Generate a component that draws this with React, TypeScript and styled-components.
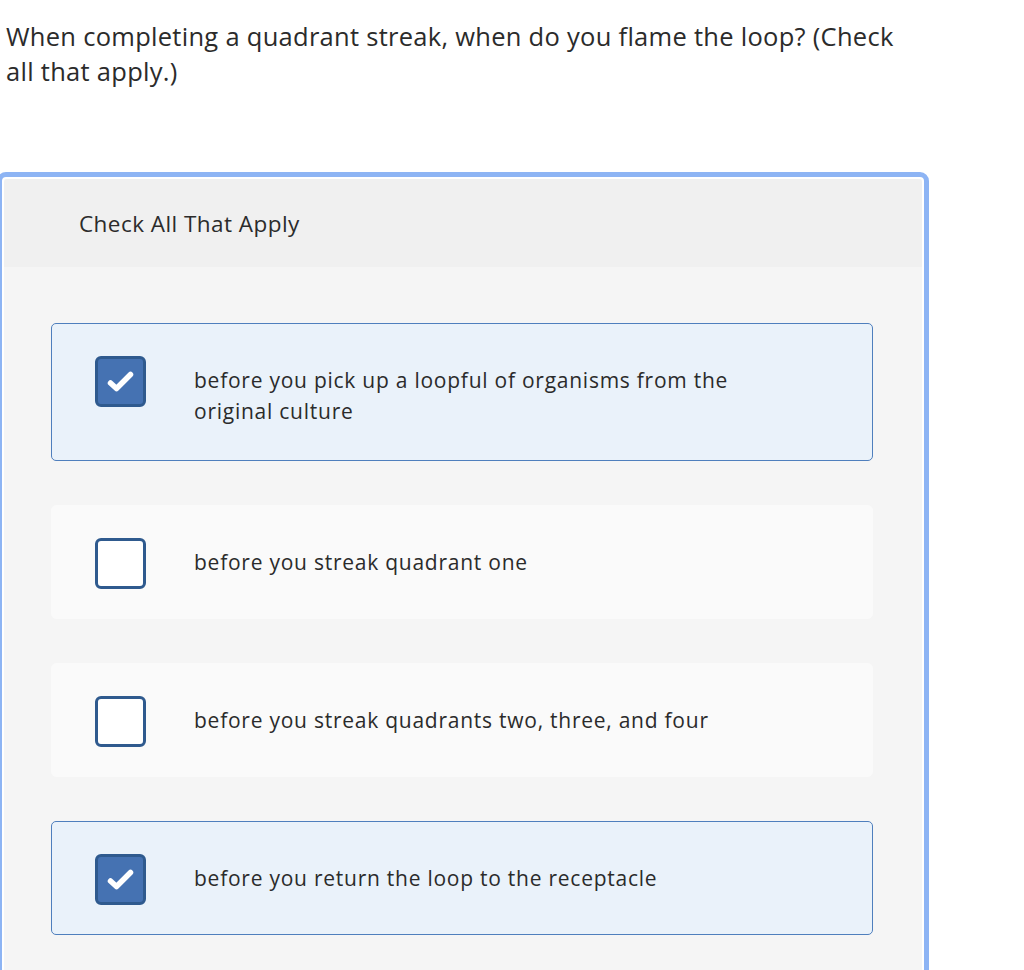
import React from "react";
import styled, { createGlobalStyle } from "styled-components";

const GlobalStyle = createGlobalStyle`
  body {
    margin: 0;
    background: #ffffff;
    font-family: "Open Sans", Lato, sans-serif;
    color: #2b2b2b;
  }
`;

const options = [
  { text: "before you pick up a loopful of organisms from the original culture", checked: true },
  { text: "before you streak quadrant one", checked: false },
  { text: "before you streak quadrants two, three, and four", checked: false },
  { text: "before you return the loop to the receptacle", checked: true }
];

const Page = styled.div`
  width: 1024px;
  height: 970px;
  overflow: hidden;
`;

const Question = styled.p`
  margin: 0;
  padding: 19px 0 0 6px;
  width: 910px;
  font-size: 25.5px;
  line-height: 35px;
  letter-spacing: 0.28px;
  color: #2b2b2b;
`;

const Panel = styled.div`
  margin: 83px 0 0 -3px;
  width: 932px;
  border: 5px solid #8db4f4;
  border-radius: 9px;
  box-sizing: border-box;
  background: #f5f5f5;
  box-shadow: inset 0 0 0 2px #ffffff;
  padding: 2px;
`;

const Header = styled.div`
  height: 88px;
  display: flex;
  align-items: center;
  padding-left: 75px;
  background: #f0f0f0;
  border-radius: 4px 4px 0 0;
  font-size: 22.5px;
  letter-spacing: 0.45px;
  color: #2b2b2b;
`;

const Body = styled.div`
  padding: 56px 49px 40px 47px;
  display: flex;
  flex-direction: column;
  gap: 44px;
`;

const Option = styled.label<{ $checked: boolean }>`
  display: flex;
  align-items: flex-start;
  gap: 48px;
  padding: 32px 43px 29px;
  border-radius: 5px;
  border: 1px solid ${(p) => (p.$checked ? "#4f7fbd" : "#fafafa")};
  background: ${(p) => (p.$checked ? "#eaf2fa" : "#fafafa")};
  box-sizing: border-box;
  cursor: pointer;
`;

const Box = styled.span<{ $checked: boolean }>`
  flex: none;
  width: 51px;
  height: 51px;
  box-sizing: border-box;
  border-radius: 6px;
  border: 3px solid #2f5a8e;
  background: ${(p) => (p.$checked ? "#4572b2" : "#ffffff")};
  display: flex;
  align-items: center;
  justify-content: center;
`;

const OptionText = styled.span`
  margin-top: 9px;
  margin-bottom: 4px;
  max-width: 590px;
  font-size: 21px;
  line-height: 31px;
  letter-spacing: 0.75px;
  color: #2b2b2b;
`;

const Check = () => (
  <svg width="51" height="51" viewBox="0 0 51 51" style={{ margin: -3 }}>
    <path
      d="M15.5 27 L21.5 32.5 L35.5 18.5"
      fill="none"
      stroke="#ffffff"
      strokeWidth="5.5"
      strokeLinecap="round"
      strokeLinejoin="round"
    />
  </svg>
);

const App = () => {
  return (
    <Page>
      <GlobalStyle />
      <Question>
        When completing a quadrant streak, when do you flame the loop? (Check all that apply.)
      </Question>
      <Panel>
        <Header>Check All That Apply</Header>
        <Body>
          {options.map((o) => (
            <Option key={o.text} $checked={o.checked}>
              <Box $checked={o.checked}>{o.checked && <Check />}</Box>
              <OptionText>{o.text}</OptionText>
            </Option>
          ))}
        </Body>
      </Panel>
    </Page>
  );
};

export default App;
